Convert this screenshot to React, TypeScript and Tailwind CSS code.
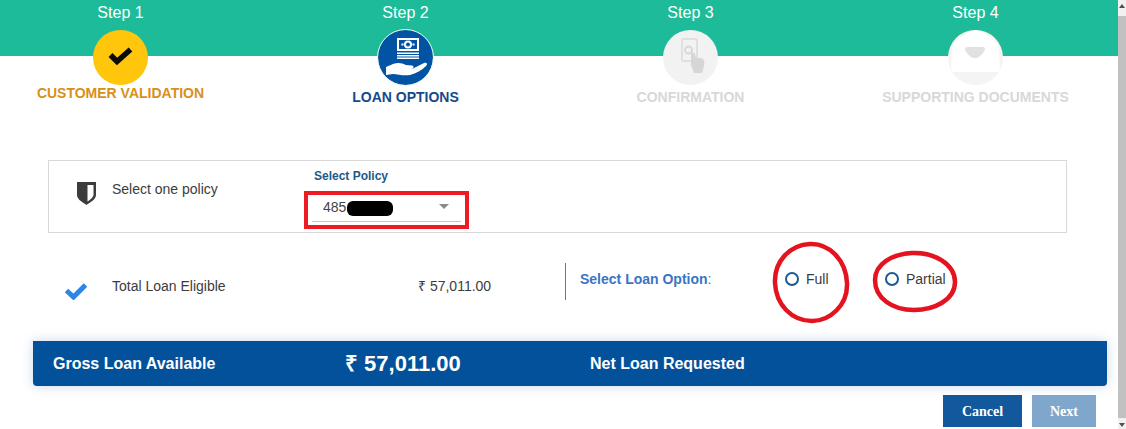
import React from "react";

function YellowCheck() {
  return (
    <svg width="55" height="55" viewBox="0 0 55 55">
      <path d="M17.5 25 L24 31.5 L37.5 19.5" fill="none" stroke="#0b0b0b" strokeWidth="5.5" />
    </svg>
  );
}

function LoanIcon() {
  return (
    <svg width="55" height="55" viewBox="0 0 55 55">
      <g transform="translate(0 1)">
        <rect x="19" y="7" width="22" height="13" fill="#fff" />
        <rect x="21" y="9" width="18" height="9" fill="#0353a4" />
        <circle cx="30" cy="13.5" r="4" fill="#fff" />
        <circle cx="30" cy="13.5" r="2" fill="#0353a4" />
        <rect x="23.5" y="12.5" width="2" height="2" fill="#fff" />
        <rect x="34.5" y="12.5" width="2" height="2" fill="#fff" />
        <rect x="19" y="21.5" width="22" height="1.5" fill="#fff" />
        <rect x="19" y="24" width="22" height="1.5" fill="#fff" />
        <rect x="19" y="26.5" width="22" height="1.5" fill="#fff" />
        <path
          d="M8 36 L15 33 C20 31 24 32 28 34 L34 34.5 C36 35 36 37 34 37.5 L27 38 L35 37.5 L46 32 C49 31 50 33 48 35 C44 39 38 42.5 32 44 C26 45 20 43.5 15 43 L8 44 Z"
          fill="#fff"
        />
      </g>
    </svg>
  );
}

function PhoneIcon() {
  return (
    <svg width="55" height="55" viewBox="0 0 55 55">
      <rect x="19" y="9" width="15" height="22" rx="1.5" fill="none" stroke="#e0e0e0" strokeWidth="2" />
      <circle cx="25.5" cy="20" r="3.5" fill="none" stroke="#d8d8d8" strokeWidth="2" />
      <path
        d="M28 24 C29 22 31 22 32 24 L33 28 L38 28 C41 29 42 32 41 36 L39 43 L31 43 L28 35 Z"
        fill="#d6d6d6"
      />
    </svg>
  );
}

function EnvelopeIcon() {
  return (
    <svg width="55" height="55" viewBox="0 0 55 55">
      <path d="M4 17 C10 8 18 2 27.5 0 C37 2 45 8 51 17 L52 42 L3 42 Z" fill="#fff" />
      <path d="M17 19.5 C17 18 18 17 19.5 17 L34.5 17 C36 17 37 18 37 19.5 C37 21 33 26 30 27.5 C28 28.5 26 28.5 24 27.5 C21 26 17 21 17 19.5 Z" fill="#e2e0e0" />
    </svg>
  );
}

function Shield() {
  return (
    <svg width="19" height="23" viewBox="0 0 19 23">
      <path d="M0 0 H19 V13 C19 17 14 20 9.5 23 C5 20 0 17 0 13 Z" fill="#3c3c3c" />
      <path d="M10.5 3 H16.5 V12.5 C16.5 15 13.5 17.5 10.5 19.5 Z" fill="#fff" />
    </svg>
  );
}

function BlueCheck() {
  return (
    <svg width="22" height="17" viewBox="0 0 22 17">
      <path d="M1.5 7.5 L8.5 14 L20.5 2" fill="none" stroke="#2a86e8" strokeWidth="5" />
    </svg>
  );
}

const steps = [
  {
    title: "Step 1",
    label: "CUSTOMER VALIDATION",
    circle: "bg-[#ffc60b]",
    text: "mt-[1px] text-[#d98f1b]",
    icon: <YellowCheck />,
  },
  {
    title: "Step 2",
    label: "LOAN OPTIONS",
    circle: "bg-[#0353a4] outline outline-1 outline-[#e8f3f0]",
    text: "mt-[5px] text-[#154a8a]",
    icon: <LoanIcon />,
  },
  {
    title: "Step 3",
    label: "CONFIRMATION",
    circle: "bg-[#f3f2f2]",
    text: "mt-[5px] text-[#d8d8d8]",
    icon: <PhoneIcon />,
  },
  {
    title: "Step 4",
    label: "SUPPORTING DOCUMENTS",
    circle: "bg-[#f6f3f3]",
    text: "mt-[5px] text-[#d8d8d8]",
    icon: <EnvelopeIcon />,
  },
];

export default function App() {
  return (
    <div className="flex h-[429px] w-[1126px] overflow-hidden bg-white font-['Liberation_Sans',Arial,sans-serif] text-[#3c3c3c]">
      <main className="w-[1118px] shrink-0 overflow-hidden">
        <div className="h-[160px] bg-[linear-gradient(#1dbb99_0,#1dbb99_56px,#fff_56px)]">
          <div className="ml-[-22px] grid w-[1140px] grid-cols-4 pt-[3px]">
            {steps.map((s) => (
              <div key={s.title} className="flex flex-col items-center">
                <div className="h-[20px] text-[16px] leading-[20px] text-white">{s.title}</div>
                <div className={`mt-[7px] h-[55px] w-[55px] overflow-hidden rounded-full ${s.circle}`}>{s.icon}</div>
                <div className={`h-[14px] whitespace-nowrap text-[14px] font-bold leading-[14px] ${s.text}`}>
                  {s.label}
                </div>
              </div>
            ))}
          </div>
        </div>

        <section className="ml-[48px] mr-[51px] flex h-[73px] items-start border border-[#d8d8d8]">
          <div className="ml-[28px] mt-[21px] w-[19px]">
            <Shield />
          </div>
          <div className="ml-[16px] mt-[20px] w-[192px] text-[14px] leading-[16px]">Select one policy</div>
          <div className="mt-[8px] w-[165px]">
            <div className="ml-[10px] h-[14px] text-[12px] font-bold leading-[14px] text-[#1b5a8a]">Select Policy</div>
            <div className="relative mt-[8px] h-[38px] border-4 border-[#ed1c24] text-[14px] text-[#444]">
              <div className="pl-[15px] pt-[4px] leading-[16px]">485</div>
              <div className="absolute left-[39px] top-[6px] h-[15px] w-[46px] rounded-[6px] bg-black" />
              <div className="absolute right-[16px] top-[9px] h-0 w-0 border-x-[5px] border-t-[5px] border-x-transparent border-t-[#8a8a8a]" />
              <div className="absolute bottom-[3px] left-[4px] right-[4px] h-px bg-[#c8c8c8]" />
            </div>
          </div>
        </section>

        <section className="flex h-[108px] items-start">
          <div className="ml-[65px] mt-[50px] w-[22px]">
            <BlueCheck />
          </div>
          <div className="ml-[25px] mt-[45px] w-[306px] text-[14px] leading-[16px]">Total Loan Eligible</div>
          <div className="mt-[45px] w-[147px] text-[14px] leading-[16px]">₹ 57,011.00</div>
          <div className="mt-[30px] h-[37px] w-px bg-[#777]" />
          <div className="ml-[14px] mt-[38px] w-[205px] text-[14px] leading-[16px] text-[#3a75c4]">
            <span className="font-bold">Select Loan Option</span>
            <span>:</span>
          </div>
          <div className="relative mt-[38px] flex w-[100px] items-center text-[14px] leading-[16px]">
            <span className="h-[14px] w-[14px] rounded-full border-2 border-[#1a5a96]" />
            <span className="ml-[7px]">Full</span>
            <svg className="absolute left-[-13px] top-[-30px]" width="80" height="84" viewBox="0 0 80 84">
              <path
                d="M38 3 C56 2 74 18 75 42 C76 64 58 80 40 80 C20 80 4 64 3 42 C2 20 18 4 38 3 Z"
                fill="none"
                stroke="#e3141f"
                strokeWidth="4.5"
              />
            </svg>
          </div>
          <div className="relative mt-[38px] flex items-center text-[14px] leading-[16px]">
            <span className="h-[14px] w-[14px] rounded-full border-2 border-[#1a5a96]" />
            <span className="ml-[7px]">Partial</span>
            <svg className="absolute left-[-13px] top-[-21px]" width="86" height="64" viewBox="0 0 86 64">
              <path
                d="M40 3 C62 2 83 14 83 32 C83 50 62 60 42 60 C20 60 3 48 3 30 C3 14 20 4 40 3 Z"
                fill="none"
                stroke="#e3141f"
                strokeWidth="4.5"
              />
            </svg>
          </div>
        </section>

        <section className="ml-[33px] mr-[11px] flex h-[45px] items-center rounded-b-[4px] bg-[#03519b] pl-[20px] font-bold text-white shadow-[0_0_12px_rgba(3,81,155,0.22)]">
          <div className="w-[292px] text-[16px]">Gross Loan Available</div>
          <div className="w-[245px] text-[22px]">₹ 57,011.00</div>
          <div className="text-[16px]">Net Loan Requested</div>
        </section>

        <div className="mr-[22px] mt-[9px] flex justify-end gap-[10px] font-['Liberation_Serif',serif] text-[14px] font-bold">
          <button className="h-[32px] w-[79px] bg-[#11589c] text-white">Cancel</button>
          <button className="h-[32px] w-[64px] bg-[#7fa7cb] text-white">Next</button>
        </div>
      </main>
      <aside className="flex w-[8px] flex-col items-center bg-[#f1f1f1]">
        <div className="mt-[4px] h-0 w-0 border-x-[3px] border-b-[4px] border-x-transparent border-b-[#505050]" />
        <div className="mt-[8px] h-[402px] w-full bg-[#c1c1c1]" />
        <div className="mt-[5px] h-0 w-0 border-x-[3px] border-t-[4px] border-x-transparent border-t-[#505050]" />
      </aside>
    </div>
  );
}
